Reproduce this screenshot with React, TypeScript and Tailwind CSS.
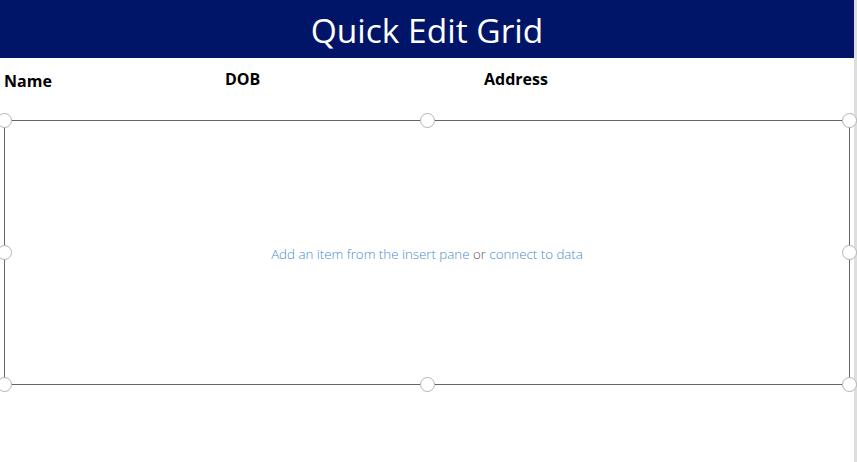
import React from "react";

function Handle({ className }: { className: string }) {
  return (
    <div
      className={`absolute w-[15px] h-[15px] rounded-full bg-white border-[1.5px] border-[#b3b3b3] ${className}`}
    />
  );
}

export default function App() {
  return (
    <div className="w-[857px] h-[462px] bg-white overflow-hidden flex font-['Open_Sans',sans-serif]">
      <div className="w-[854px] flex flex-col">
        <div className="h-[58px] bg-[#001568] flex items-center justify-center">
          <span className="text-white text-[33.5px] leading-none pt-[3px]">Quick Edit Grid</span>
        </div>
        <div className="h-[62px] flex items-start pl-[4px] pt-[9px] text-[16px] font-bold text-black">
          <span className="w-[221px] pt-[2px]">Name</span>
          <span className="w-[259px]">DOB</span>
          <span>Address</span>
        </div>
        <div className="ml-[4px] w-[846px] h-[265px] border border-[#666666] relative flex items-center justify-center">
          <div className="text-[13.3px] font-light pt-[5px]">
            <span className="text-[#4a8dd0]">Add an item from the insert pane</span>
            <span className="text-[#5a5a5a]"> or </span>
            <span className="text-[#4a8dd0]">connect to data</span>
          </div>
          <Handle className="left-[-8px] top-[-8px]" />
          <Handle className="left-[415px] top-[-8px]" />
          <Handle className="right-[-8px] top-[-8px]" />
          <Handle className="left-[-8px] top-[124px]" />
          <Handle className="right-[-8px] top-[124px]" />
          <Handle className="left-[-8px] bottom-[-8px]" />
          <Handle className="left-[415px] bottom-[-8px]" />
          <Handle className="right-[-8px] bottom-[-8px]" />
        </div>
      </div>
      <div className="w-[3px] bg-[#dedede]" />
    </div>
  );
}
